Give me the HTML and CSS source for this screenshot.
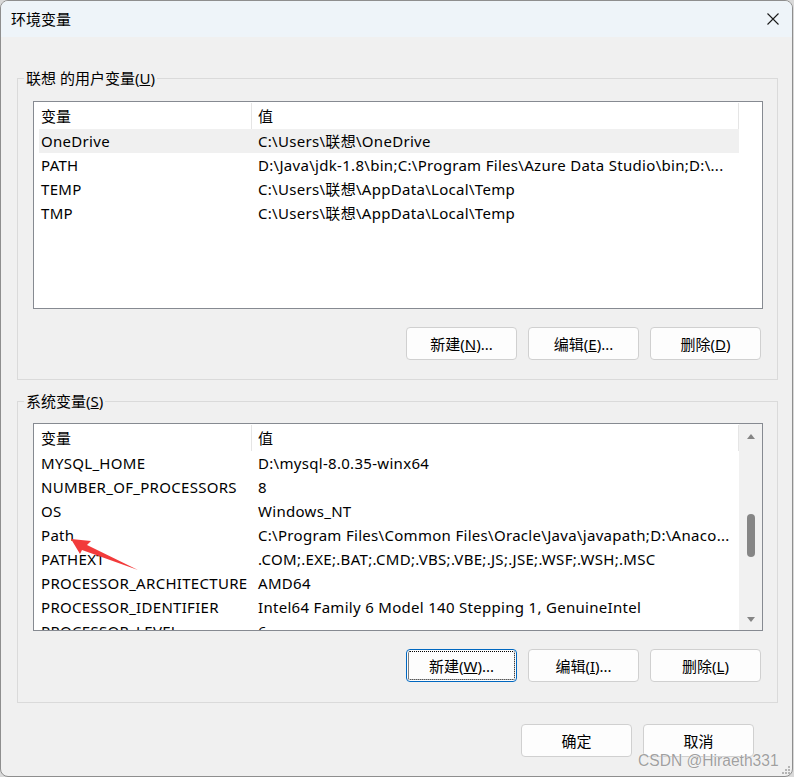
FILE: index.html
```html
<!DOCTYPE html>
<html lang="zh-CN">
<head>
<meta charset="utf-8">
<title>环境变量</title>
<link rel="stylesheet" href="styles.css">
</head>
<body>
<div class="window">
  <div class="titlebar">
    <span class="title">环境变量</span>
    <svg class="close" width="12" height="12" viewBox="0 0 12 12"><path d="M0.5 0.5L11.5 11.5M11.5 0.5L0.5 11.5" stroke="#1b1b1b" stroke-width="1.1" fill="none"/></svg>
  </div>
  <div class="content">
    <fieldset class="group group-user">
      <legend>联想 的用户变量(<u>U</u>)</legend>
      <div class="list">
        <div class="table">
          <div class="thead"><div class="th th1">变量</div><div class="th th2">值</div></div>
          <div class="tr sel"><div class="td td1">OneDrive</div><div class="td td2">C:\Users\联想\OneDrive</div></div>
          <div class="tr"><div class="td td1">PATH</div><div class="td td2">D:\Java\jdk-1.8\bin;C:\Program Files\Azure Data Studio\bin;D:\...</div></div>
          <div class="tr"><div class="td td1">TEMP</div><div class="td td2">C:\Users\联想\AppData\Local\Temp</div></div>
          <div class="tr"><div class="td td1">TMP</div><div class="td td2">C:\Users\联想\AppData\Local\Temp</div></div>
        </div>
      </div>
      <div class="btnrow">
        <button class="btn">新建(<u>N</u>)...</button>
        <button class="btn">编辑(<u>E</u>)...</button>
        <button class="btn">删除(<u>D</u>)</button>
      </div>
    </fieldset>
    <fieldset class="group group-sys">
      <legend>系统变量(<u>S</u>)</legend>
      <div class="list">
        <div class="table">
          <div class="thead"><div class="th th1">变量</div><div class="th th2">值</div></div>
          <div class="tr"><div class="td td1">MYSQL_HOME</div><div class="td td2">D:\mysql-8.0.35-winx64</div></div>
          <div class="tr"><div class="td td1">NUMBER_OF_PROCESSORS</div><div class="td td2">8</div></div>
          <div class="tr"><div class="td td1">OS</div><div class="td td2">Windows_NT</div></div>
          <div class="tr"><div class="td td1">Path</div><div class="td td2">C:\Program Files\Common Files\Oracle\Java\javapath;D:\Anaco...</div></div>
          <div class="tr"><div class="td td1">PATHEXT</div><div class="td td2">.COM;.EXE;.BAT;.CMD;.VBS;.VBE;.JS;.JSE;.WSF;.WSH;.MSC</div></div>
          <div class="tr"><div class="td td1">PROCESSOR_ARCHITECTURE</div><div class="td td2">AMD64</div></div>
          <div class="tr"><div class="td td1">PROCESSOR_IDENTIFIER</div><div class="td td2">Intel64 Family 6 Model 140 Stepping 1, GenuineIntel</div></div>
          <div class="tr"><div class="td td1">PROCESSOR_LEVEL</div><div class="td td2">6</div></div>
        </div>
        <div class="scrollbar">
          <svg class="arrow-up" width="8" height="5" viewBox="0 0 8 5"><path d="M4 0L8 5H0Z" fill="#858585"/></svg>
          <div class="thumb"></div>
          <svg class="arrow-down" width="8" height="5" viewBox="0 0 8 5"><path d="M0 0H8L4 5Z" fill="#858585"/></svg>
        </div>
      </div>
      <div class="btnrow">
        <button class="btn focused">新建(<u>W</u>)...</button>
        <button class="btn">编辑(<u>I</u>)...</button>
        <button class="btn">删除(<u>L</u>)</button>
      </div>
    </fieldset>
    <div class="dlgrow">
      <button class="btn">确定</button>
      <button class="btn">取消</button>
    </div>
  </div>
  <svg class="annot-arrow" width="80" height="40" viewBox="0 0 80 40"><polygon points="0,0 20,2 16,6 67,31 11,11 9,15" fill="#f23b3b"/></svg>
  <div class="watermark">CSDN @Hiraeth331</div>
  <svg class="grip" width="9" height="9" viewBox="0 0 9 9" fill="#b5b5b5"><rect x="6" y="0" width="2" height="2"/><rect x="3" y="3" width="2" height="2"/><rect x="6" y="3" width="2" height="2"/><rect x="0" y="6" width="2" height="2"/><rect x="3" y="6" width="2" height="2"/><rect x="6" y="6" width="2" height="2"/></svg>
</div>
</body>
</html>
```
FILE: styles.css
```css
html, body {
  margin: 0;
  padding: 0;
}
body {
  width: 794px;
  height: 777px;
  overflow: hidden;
  background: #d9d9d9;
  font-family: "Noto Sans", "Noto Sans CJK SC", sans-serif;
  font-size: 15px;
  color: #000;
}
.window {
  position: relative;
  box-sizing: border-box;
  width: 793px;
  height: 777px;
  border: 1px solid #8e8e8e;
  border-radius: 8px;
  background: #f0f0f0;
  overflow: hidden;
}
.titlebar {
  height: 36px;
  background: #eef4f9;
  display: flex;
  align-items: center;
  justify-content: space-between;
  padding: 0 13px 0 10px;
}
.title {
  line-height: 20px;
}
.close {
  display: block;
}
.content {
  padding: 0 14px 0 16px;
}
.group {
  margin: 32px 0 0;
  padding: 14px 14px 19px 15px;
  border: 1px solid #dadada;
  min-width: 0;
}
.group-sys {
  margin-top: 12px;
  padding-top: 13px;
  padding-bottom: 20px;
}
.group legend {
  line-height: 18px;
  padding: 0 2px;
  margin-left: -9px;
}
.list {
  box-sizing: border-box;
  height: 208px;
  border: 1px solid #868a91;
  background: #fff;
  display: flex;
  overflow: hidden;
}
.table {
  width: 705px;
  flex: none;
}
.thead {
  display: flex;
  height: 27px;
}
.th {
  box-sizing: border-box;
  height: 26px;
  margin-top: 1px;
  line-height: 26px;
  border-right: 1px solid #e5e5e5;
}
.th1 {
  width: 218px;
  padding-left: 7px;
}
.th2 {
  width: 487px;
  padding-left: 6px;
}
.tr {
  display: flex;
  height: 24px;
  line-height: 24px;
  margin-left: 5px;
  width: 700px;
  white-space: nowrap;
}
.tr.sel {
  background: #f0f0f0;
}
.td {
  letter-spacing: 0.3px;
}
.td1 {
  box-sizing: border-box;
  width: 212px;
  padding-left: 2px;
  overflow: hidden;
  flex: none;
}
.td2 {
  padding-left: 7px;
  overflow: hidden;
  flex: 1;
}
.scrollbar {
  width: 23px;
  flex: none;
  background: #f1f1f1;
  display: flex;
  flex-direction: column;
  align-items: center;
}
.scrollbar svg {
  display: block;
}
.arrow-up {
  margin-top: 10px;
}
.thumb {
  width: 8px;
  height: 43px;
  border-radius: 4px;
  background: #868686;
  margin-top: 75px;
}
.arrow-down {
  margin-top: auto;
  margin-bottom: 8px;
}
.btnrow {
  display: flex;
  justify-content: flex-end;
  gap: 11px;
  margin-top: 18px;
  padding-right: 2px;
}
.btn {
  box-sizing: border-box;
  width: 111px;
  height: 33px;
  border: 1px solid #d0d0d0;
  border-radius: 4px;
  background: #fdfdfd;
  font: inherit;
  color: #000;
  padding: 0;
  display: flex;
  align-items: center;
  justify-content: center;
}
.btn.focused {
  border-color: #0067c0;
  outline: 1px dotted #000;
  outline-offset: -3px;
}
.dlgrow {
  display: flex;
  justify-content: flex-end;
  gap: 11px;
  margin-top: 21px;
  padding-right: 24px;
}
.annot-arrow {
  position: absolute;
  left: 70px;
  top: 538px;
}
.watermark {
  position: absolute;
  left: 637px;
  top: 751px;
  font-family: "Liberation Sans", Arial, sans-serif;
  font-size: 15.6px;
  line-height: 18px;
  color: #a0a0a0;
  text-shadow: 0 0 1px #fff, 0 0 1px #fff;
}
.grip {
  position: absolute;
  right: 1px;
  bottom: 1px;
}
```
